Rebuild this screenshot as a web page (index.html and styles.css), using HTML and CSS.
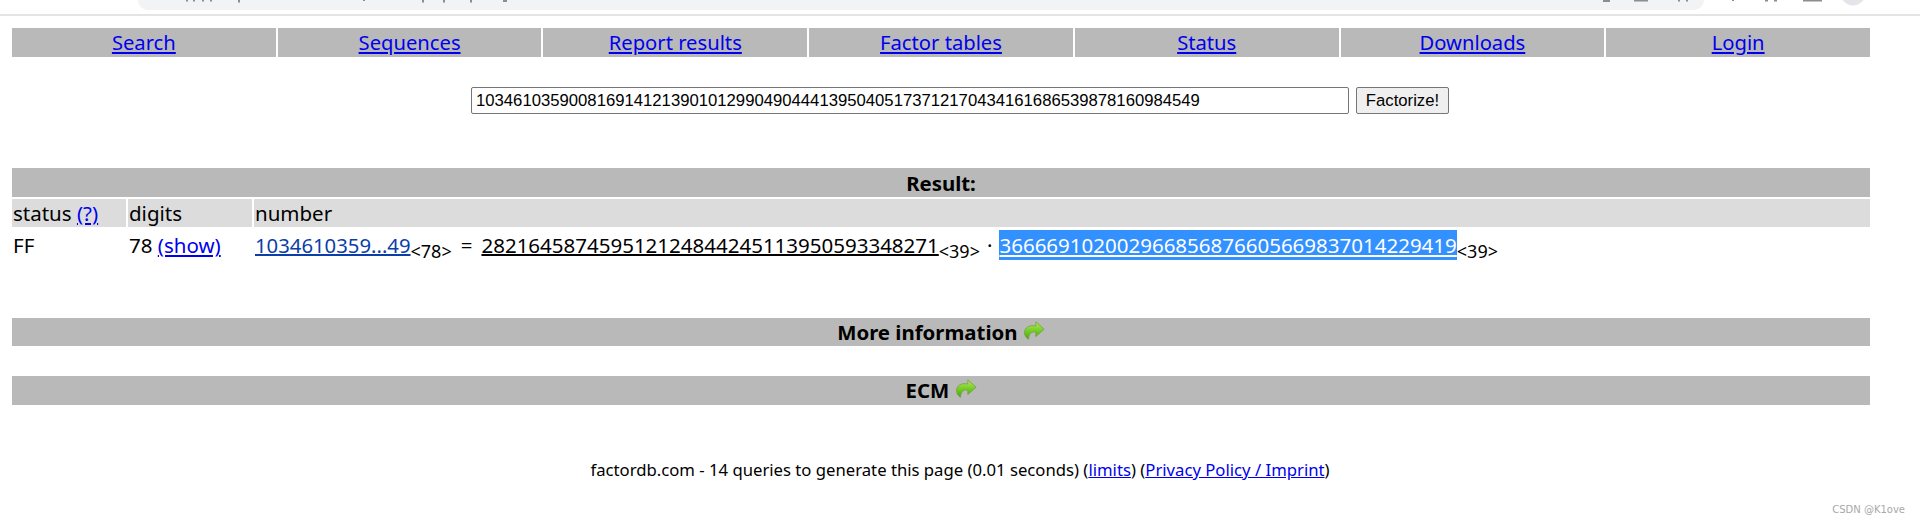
FILE: index.html
```html
<!DOCTYPE html>
<html lang="en">
<head>
<meta charset="utf-8">
<title>factordb.com</title>
<link rel="stylesheet" href="styles.css">
</head>
<body>
<div class="chrome">
  <div class="address"></div>
  <svg class="fragments" viewBox="0 0 1920 6" aria-hidden="true">
    <g fill="#8a8d91">
      <rect x="186" y="0" width="2" height="1.500"/><rect x="193" y="0" width="2" height="1.500"/><rect x="202" y="0" width="2" height="1.500"/><rect x="210" y="0" width="2" height="1.500"/><rect x="238" y="0" width="2" height="2.500"/><rect x="363" y="0" width="2" height="1"/><rect x="422" y="0" width="2" height="2.500"/><rect x="443" y="0" width="2" height="2.500"/><rect x="470" y="0" width="2" height="2.500"/><rect x="503" y="0" width="4" height="2"/>
      <rect x="1603" y="0" width="7" height="2"/><rect x="1634" y="0" width="14" height="1.500"/><rect x="1678" y="0" width="2" height="1.500"/><rect x="1686" y="0" width="2" height="1.500"/><rect x="1732" y="0" width="2" height="1"/><rect x="1765" y="0" width="3" height="1.500"/><rect x="1774" y="0" width="3" height="1.500"/><rect x="1803" y="0" width="19" height="1.500"/>
    </g>
    <circle cx="1853" cy="-7" r="12.500" fill="#e3e5ea"/>
  </svg>
</div>
<main class="page">
  <nav class="nav">
    <a href="#">Search</a>
    <a href="#">Sequences</a>
    <a href="#">Report results</a>
    <a href="#">Factor tables</a>
    <a href="#">Status</a>
    <a href="#">Downloads</a>
    <a href="#">Login</a>
  </nav>
  <form class="query">
    <input class="query-input" type="text" value="103461035900816914121390101299049044413950405173712170434161686539878160984549">
    <button class="query-button" type="button">Factorize!</button>
  </form>
  <h2 class="bar result-bar">Result:</h2>
  <div class="result-table">
    <div class="head">status <a href="#">(?)</a></div>
    <div class="head">digits</div>
    <div class="head">number</div>
    <div class="cell">FF</div>
    <div class="cell">78 <a href="#">(show)</a></div>
    <div class="cell number"><a class="dark-link" href="#">1034610359...49</a><sub>&lt;78&gt;</sub><span class="op">=</span><a class="black-link" href="#">282164587459512124844245113950593348271</a><sub>&lt;39&gt;</sub><span class="op dot">·</span><a class="selected" href="#">366669102002966856876605669837014229419</a><sub>&lt;39&gt;</sub></div>
  </div>
  <h2 class="bar more-bar">More information
    <svg class="arrow" viewBox="0 0 24 24" aria-hidden="true"><defs><linearGradient id="g1" x1="0" y1="0" x2="0" y2="1"><stop offset="0" stop-color="#b4e85a"/><stop offset="0.600" stop-color="#6cc81e"/><stop offset="1" stop-color="#4f9e14"/></linearGradient></defs><path d="M14 2 L23 10 L14 18 L14 13 C9 12.500 6.500 15 6 21 C2.500 19 1 15.500 2 11.500 C3.500 7 8 5.500 14 6.500 Z" fill="url(#g1)" stroke="#6f9e3a" stroke-width="0.800"/></svg>
  </h2>
  <h2 class="bar ecm-bar">ECM
    <svg class="arrow" viewBox="0 0 24 24" aria-hidden="true"><path d="M14 2 L23 10 L14 18 L14 13 C9 12.500 6.500 15 6 21 C2.500 19 1 15.500 2 11.500 C3.500 7 8 5.500 14 6.500 Z" fill="url(#g1)" stroke="#6f9e3a" stroke-width="0.800"/></svg>
  </h2>
  <footer class="foot">factordb.com - 14 queries to generate this page (0.01 seconds) (<a href="#">limits</a>) (<a href="#">Privacy Policy / Imprint</a>)</footer>
</main>
<div class="mark">CSDN @K1ove</div>
</body>
</html>
```
FILE: styles.css
```css
* { box-sizing: border-box; }
html, body { margin: 0; height: 522px; overflow: hidden; background: #fff; }
body { font-family: "Noto Sans", "Open Sans", sans-serif; font-size: 19px; color: #000; position: relative; }
a { color: #00e; }
.chrome { height: 16px; border-bottom: 2px solid #e4e4e4; padding: 0 216px 0 138px; position: relative; }
.address { height: 10px; background: #f1f3f4; border-radius: 0 0 14px 14px; }
.fragments { position: absolute; left: 0; top: 0; width: 1920px; height: 6px; }
.page { padding: 12px 50px 0 12px; }
.nav { display: grid; grid-template-columns: repeat(7, 1fr); column-gap: 2px; height: 29px; }
.nav a { background: #b9b9b9; text-align: center; line-height: 29px; font-size: 20.200px; }
.query { display: flex; justify-content: center; gap: 7px; margin-top: 30px; height: 27px; padding-left: 38px; }
.query-input { width: 878px; height: 27px; font: 16.700px "Liberation Sans", sans-serif; padding: 0 4px; border: 1px solid #767676; border-radius: 2px; }
.query-button { width: 93px; height: 27px; font: 16.700px "Liberation Sans", sans-serif; background: #efefef; border: 1px solid #767676; border-radius: 2px; padding: 0; }
.bar { margin: 0; background: #b9b9b9; height: 28px; line-height: 29px; text-align: center; font-size: 20.400px; font-weight: 700; }
.result-bar { margin-top: 54px; height: 29px; line-height: 31px; }
.result-table { display: grid; grid-template-columns: 114px 124px 1fr; column-gap: 2px; margin-top: 2px; }
.head { background: #dcdcdc; height: 28px; line-height: 28px; padding-left: 1px; font-size: 20.500px; }
.cell { height: 34px; padding-top: 3px; line-height: 30px; padding-left: 1px; font-size: 20.500px; white-space: nowrap; }
.number sub { font-size: 18px; vertical-align: -5px; line-height: 0; }
.op { margin: 0 9px; }
.dot { margin: 0 7px; }
.dark-link { color: #0b3ea8; font-size: 20.300px; text-decoration-thickness: 2px; }
.black-link { color: #000; text-decoration-thickness: 2px; }
.selected { background: #3390ff; color: #fff; display: inline-block; height: 30px; }
.more-bar { margin-top: 57px; }
.ecm-bar { margin-top: 30px; height: 29px; }
.arrow { width: 22px; height: 22px; vertical-align: -2px; }
.foot { text-align: center; margin-top: 53px; font-size: 16.700px; padding-left: 38px; }
.mark { position: absolute; right: 15px; bottom: 7px; font: 10px "DejaVu Sans", sans-serif; color: #a8a8a8; }
```
